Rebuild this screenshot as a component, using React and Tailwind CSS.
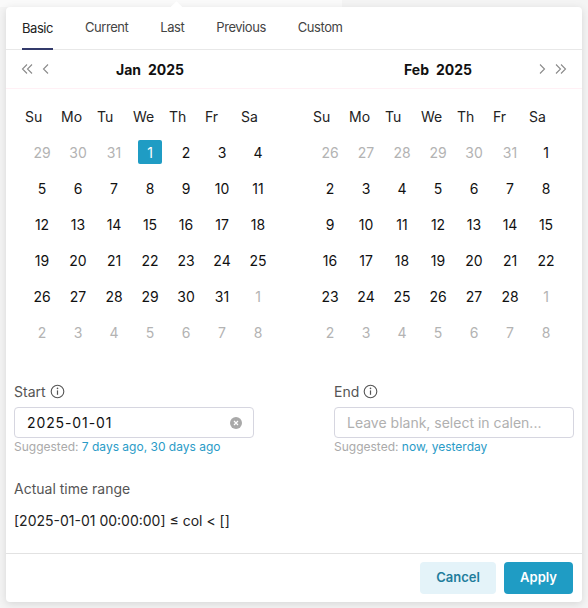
import React from "react";

const jan = [
  [29, 30, 31, 1, 2, 3, 4],
  [5, 6, 7, 8, 9, 10, 11],
  [12, 13, 14, 15, 16, 17, 18],
  [19, 20, 21, 22, 23, 24, 25],
  [26, 27, 28, 29, 30, 31, 1],
  [2, 3, 4, 5, 6, 7, 8],
];
const feb = [
  [26, 27, 28, 29, 30, 31, 1],
  [2, 3, 4, 5, 6, 7, 8],
  [9, 10, 11, 12, 13, 14, 15],
  [16, 17, 18, 19, 20, 21, 22],
  [23, 24, 25, 26, 27, 28, 1],
  [2, 3, 4, 5, 6, 7, 8],
];
const days = ["Su", "Mo", "Tu", "We", "Th", "Fr", "Sa"];

function DoubleLeft() {
  return (
    <svg width="14" height="12" viewBox="0 0 14 12" fill="none" stroke="#8a8a8a" strokeWidth="1.1">
      <path d="M7 1.5 L2.5 6 L7 10.5" />
      <path d="M12 1.5 L7.5 6 L12 10.5" />
    </svg>
  );
}
function SingleLeft() {
  return (
    <svg width="8" height="12" viewBox="0 0 8 12" fill="none" stroke="#8a8a8a" strokeWidth="1.1">
      <path d="M6 1.5 L1.5 6 L6 10.5" />
    </svg>
  );
}
function DoubleRight() {
  return (
    <svg width="14" height="12" viewBox="0 0 14 12" fill="none" stroke="#8a8a8a" strokeWidth="1.1">
      <path d="M2 1.5 L6.5 6 L2 10.5" />
      <path d="M7 1.5 L11.5 6 L7 10.5" />
    </svg>
  );
}
function SingleRight() {
  return (
    <svg width="8" height="12" viewBox="0 0 8 12" fill="none" stroke="#8a8a8a" strokeWidth="1.1">
      <path d="M2 1.5 L6.5 6 L2 10.5" />
    </svg>
  );
}
function Info() {
  return (
    <svg width="15" height="15" viewBox="0 0 15 15" fill="none">
      <circle cx="7.5" cy="7.5" r="6.3" stroke="#555" strokeWidth="1.1" />
      <path d="M7.5 6.4 V10.8" stroke="#555" strokeWidth="1.2" />
      <circle cx="7.5" cy="4.4" r="0.8" fill="#555" />
    </svg>
  );
}
function Clear() {
  return (
    <svg width="12" height="12" viewBox="0 0 12 12">
      <circle cx="6" cy="6" r="6" fill="#a9a9a9" />
      <path d="M4 4 L8 8 M8 4 L4 8" stroke="#fff" strokeWidth="1.2" />
    </svg>
  );
}

function Calendar({ rows, selected }) {
  return (
    <div className="grid grid-cols-7 w-[252px]">
      {days.map((d) => (
        <div key={d} className="h-9 flex items-center pl-[1px] text-[14px] text-[#222]">
          {d}
        </div>
      ))}
      {rows.map((row, ri) =>
        row.map((n, ci) => {
          const outside = (ri === 0 && n > 20) || (ri >= 4 && n < 15);
          const isSel = selected && ri === 0 && n === 1;
          return (
            <div key={ri + "-" + ci} className="h-9 flex items-center justify-center">
              {isSel ? (
                <span className="w-6 h-6 rounded-[2px] bg-[#1f9cc4] text-white flex items-center justify-center text-[14px]">
                  {n}
                </span>
              ) : (
                <span className={"text-[14px] " + (outside ? "text-[#b3b3b3]" : "text-[#111]")}>{n}</span>
              )}
            </div>
          );
        })
      )}
    </div>
  );
}

export default function App() {
  return (
    <div
      className="w-[588px] h-[608px] bg-[#f4f4f4] relative overflow-hidden"
      style={{ fontFamily: "Inter, 'Noto Sans', sans-serif" }}
    >
      <div className="h-[7px] w-[342px] bg-[#fafafa]" />
      <div className="ml-[6px] w-[576px] h-[595px] bg-white rounded-[4px] shadow-[0_2px_8px_rgba(0,0,0,0.12)] relative flex flex-col">
        <div className="absolute -top-[4px] left-[166px] w-[9px] h-[9px] bg-white rotate-45" />
        {/* Tabs */}
        <div className="h-[43px] flex items-end gap-8 px-4 border-b border-[#e8e8e8] relative">
          {["Basic", "Current", "Last", "Previous", "Custom"].map((t, i) => (
            <div
              key={t}
              className={
                "h-full flex items-center text-[13px] tracking-[-0.45px] " +
                (i === 0 ? "text-[#222] border-b-2 border-[#333a6b] -mb-[1px] pt-[2px]" : "text-[#444]")
              }
            >
              {t}
            </div>
          ))}
        </div>
        {/* Header */}
        <div className="h-[39px] flex items-center px-[14px] gap-[28px] border-b border-[#fff0f5]">
          <div className="w-[260px] flex items-center">
            <div className="w-[30px] flex items-center gap-[8px]">
              <DoubleLeft />
              <SingleLeft />
            </div>
            <div className="flex-1 flex justify-center gap-[7px] text-[14px] font-bold text-[#111]">
              <span>Jan</span>
              <span>2025</span>
            </div>
            <div className="w-[30px]" />
          </div>
          <div className="w-[260px] flex items-center">
            <div className="w-[30px]" />
            <div className="flex-1 flex justify-center gap-[7px] text-[14px] font-bold text-[#111]">
              <span>Feb</span>
              <span>2025</span>
            </div>
            <div className="w-[30px] flex items-center justify-end gap-[8px]">
              <SingleRight />
              <DoubleRight />
            </div>
          </div>
        </div>
        {/* Calendars */}
        <div className="flex px-[18px] gap-[36px] pt-[9px]">
          <Calendar rows={jan} selected />
          <Calendar rows={feb} />
        </div>
        {/* Inputs */}
        <div className="grid grid-cols-2 gap-x-[80px] px-2 mt-[31px]">
          <div>
            <div className="h-5 flex items-center gap-[4px] text-[14px] text-[#555]">
              Start <Info />
            </div>
            <div className="mt-[6px] h-[31px] border border-[#d6d6e0] rounded-[4px] flex items-center pl-3 pr-[11px] justify-between">
              <span className="text-[14px] text-[#111] tracking-[0.9px]">2025-01-01</span>
              <Clear />
            </div>
            <div className="h-4 flex items-center text-[12px] mt-[1px]">
              <span className="text-[#aaa]">Suggested:&nbsp;</span>
              <span className="text-[#2a9bc7]">7 days ago, 30 days ago</span>
            </div>
          </div>
          <div>
            <div className="h-5 flex items-center gap-[4px] text-[14px] text-[#555]">
              End <Info />
            </div>
            <div className="mt-[6px] h-[31px] border border-[#d6d6e0] rounded-[4px] flex items-center pl-3">
              <span className="text-[14px] text-[#b0b0b0]">Leave blank, select in calen...</span>
            </div>
            <div className="h-4 flex items-center text-[12px] mt-[1px]">
              <span className="text-[#aaa]">Suggested:&nbsp;</span>
              <span className="text-[#2a9bc7]">now, yesterday</span>
            </div>
          </div>
        </div>
        <div className="px-2 mt-[23px] h-5 flex items-center text-[14px] text-[#555]">Actual time range</div>
        <div className="px-2 mt-3 h-5 flex items-center text-[14px] text-[#222]">
          [2025-01-01 00:00:00] ≤ col &lt; []
        </div>
        <div className="mt-[23px] border-t border-[#e2e2e2] flex justify-end gap-2 px-[9px] pt-2">
          <button className="h-8 w-[76px] rounded-[4px] bg-[#e4f3f9] text-[#1f7d9c] text-[13px] font-semibold">
            Cancel
          </button>
          <button className="h-8 w-[69px] rounded-[4px] bg-[#1f9cc4] text-white text-[13px] font-semibold">
            Apply
          </button>
        </div>
      </div>
    </div>
  );
}
